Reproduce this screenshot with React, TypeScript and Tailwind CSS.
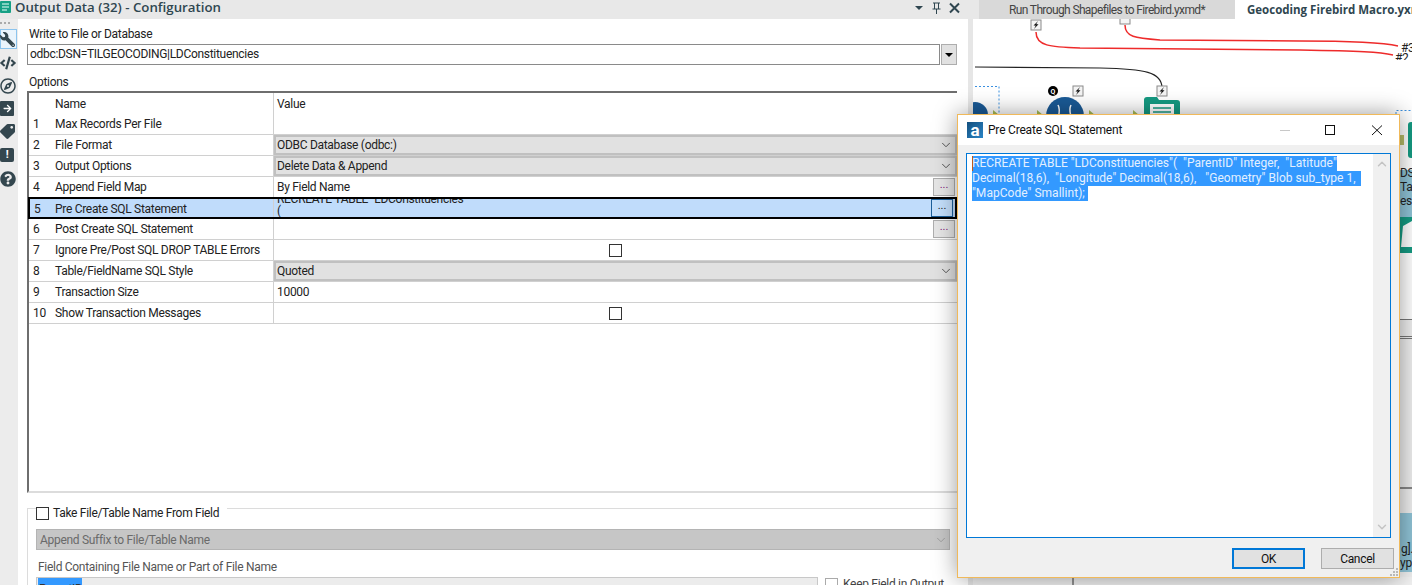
import React from "react";
import { FaWrench, FaCode, FaTag, FaQuestionCircle, FaRegCompass, FaArrowRight } from "react-icons/fa";
import { ChevronDown, ChevronUp } from "lucide-react";

type Row = {
  n: number;
  name: string;
  kind: "none" | "select" | "text" | "more" | "check" | "sql";
  value?: string;
};

const rows: Row[] = [
  { n: 2, name: "File Format", kind: "select", value: "ODBC Database (odbc:)" },
  { n: 3, name: "Output Options", kind: "select", value: "Delete Data & Append" },
  { n: 4, name: "Append Field Map", kind: "more", value: "By Field Name" },
  { n: 5, name: "Pre Create SQL Statement", kind: "sql" },
  { n: 6, name: "Post Create SQL Statement", kind: "more" },
  { n: 7, name: "Ignore Pre/Post SQL DROP TABLE Errors", kind: "check" },
  { n: 8, name: "Table/FieldName SQL Style", kind: "select", value: "Quoted" },
  { n: 9, name: "Transaction Size", kind: "text", value: "10000" },
  { n: 10, name: "Show Transaction Messages", kind: "check" },
];

const MoreButton = ({ active }: { active?: boolean }) => (
  <div
    className={`mr-[2px] flex h-[18px] w-[22px] shrink-0 items-center justify-center border pb-[4px] text-[11px] tracking-normal ${
      active ? "border-[#1d5f99] bg-[#c4dffb] text-[#222]" : "border-[#adadad] bg-[#e6e6e6] text-[#80207a]"
    }`}
  >
    ...
  </div>
);

const Lightning = ({ x, y }: { x: number; y: number }) => (
  <g>
    <rect x={x} y={y} width="10" height="10" fill="#f4f4f4" stroke="#8a8a8a" />
    <path d={`M${x + 7} ${y + 1} L${x + 2.5} ${y + 5.5} L${x + 4.8} ${y + 5.5} L${x + 3} ${y + 9} L${x + 7.5} ${y + 4.2} L${x + 5.2} ${y + 4.2} Z`} fill="#111" />
  </g>
);

const TableRow = ({ row }: { row: Row }) => {
  const selected = row.kind === "sql";
  return (
    <div
      className={`flex h-[21px] whitespace-nowrap ${
        selected
          ? "-ml-[1px] -mt-[1px] h-[22px] border-2 border-black bg-[#c0dcfb]"
          : "border-b border-[#d0d0d0]"
      }`}
    >
      <div className={`shrink-0 pl-[4px] leading-[20px] ${selected ? "w-[23px]" : "w-[24px]"}`}>{row.n}</div>
      <div className="w-[221px] shrink-0 border-r border-[#d0d0d0] pl-[2px] leading-[20px]">{row.name}</div>
      <div className="flex min-w-0 flex-1 items-center overflow-hidden">
        {row.kind === "select" && (
          <div className="flex h-full flex-1 items-center justify-between border-2 border-[#c0c0c0] bg-[#e1e1e1] pl-[1px] pr-[2px]">
            {row.value}
            <ChevronDown size={14} strokeWidth={1.5} className="text-[#444]" />
          </div>
        )}
        {row.kind === "text" && <div className="pl-[3px]">{row.value}</div>}
        {row.kind === "more" && (
          <>
            <div className="flex-1 pl-[3px]">{row.value}</div>
            <MoreButton />
          </>
        )}
        {row.kind === "sql" && (
          <>
            <div className="h-full flex-1 overflow-hidden pl-[3px]">
              <div className="-mt-[6px] leading-[12px]">RECREATE TABLE "LDConstituencies"</div>
              <div className="leading-[12px]">(</div>
            </div>
            <MoreButton active />
          </>
        )}
        {row.kind === "check" && (
          <div className="flex flex-1 justify-center">
            <div className="h-[13px] w-[13px] border border-[#333] bg-white" />
          </div>
        )}
      </div>
    </div>
  );
};

const Canvas = () => (
  <div className="relative flex-1 overflow-hidden bg-white">
    <svg className="absolute inset-0" width="439" height="566" viewBox="973 19 439 566" fill="none">
      <path d="M1036 32 C1036 46 1050 47 1080 48 L1300 50 C1360 51 1380 52 1393 55" stroke="#ee2b2b" strokeWidth="1.5" />
      <path d="M1125 25 C1125 37 1135 38 1160 40 L1300 41 C1360 41 1385 43 1398 46" stroke="#ee2b2b" strokeWidth="1.5" />
      <path d="M975 67 L1100 68 C1145 69 1162 72 1162 88" stroke="#222" strokeWidth="1.2" />
      <text x="1401" y="52" fontSize="12" fill="#222" fontFamily="Roboto">#3</text>
      <text x="1395" y="62" fontSize="12" fill="#222" fontFamily="Roboto">#2</text>
      <rect x="1390" y="60" width="22" height="6" fill="#fff" />
      <Lightning x={1031} y={20} />
      <rect x="1120" y="14" width="10" height="10" fill="#f4f4f4" stroke="#8a8a8a" />
      <Lightning x={1073} y={86} />
      <Lightning x={1157} y={86} />
      <circle cx="1053" cy="91" r="5" fill="#000" />
      <text x="1050.5" y="94" fontSize="7" fontWeight="700" fill="#fff" fontFamily="Roboto">Q</text>
      <path d="M975 86.5 H999 V115" stroke="#3a90e0" strokeDasharray="2 2" />
      <circle cx="975" cy="115" r="13" fill="#1a5a96" />
      <circle cx="1065" cy="116" r="19" fill="#1a5a96" />
      <path d="M1058 105 C1062 112 1056 118 1058 126 M1071 105 C1067 112 1074 118 1071 126" stroke="#fff" strokeWidth="1.5" />
      <path d="M993 110 l6 5 h-6 Z M1037 110 l6 5 h-6 Z M1089 110 l6 5 h-6 Z M1133 110 l6 5 h-6 Z" fill="#a9bd55" />
      <path d="M1144 100 q0 -3 3 -3 h10 l2 3 h18 q3 0 3 3 v14 h-36 Z" fill="#159a82" />
      <path d="M1150 104 h24 v12 h-24 Z" fill="#fff" />
      <path d="M1153 108 h18 M1153 112 h18" stroke="#159a82" strokeWidth="1.5" />
      <path d="M1396 170 V110.5 H1412" stroke="#3a90e0" strokeDasharray="2 2" />
      <rect x="1400" y="135" width="4" height="10" fill="#b8bd6a" />
      <rect x="1408" y="122" width="10" height="36" rx="3" fill="#159a82" />
      <rect x="1400" y="170" width="12" height="47" fill="#8fc3d6" />
      <text x="1400" y="177" fontSize="12" fill="#222" fontFamily="Roboto">DSI</text>
      <text x="1400" y="191" fontSize="12" fill="#222" fontFamily="Roboto">Tab</text>
      <text x="1400" y="205" fontSize="12" fill="#222" fontFamily="Roboto">es</text>
      <rect x="1400" y="217" width="12" height="36" fill="#159a82" />
      <path d="M1403 226 l9 -5 v26 h-11 Z" fill="#fff" />
      <rect x="1400" y="320" width="12" height="193" fill="#eeeeee" />
      <path d="M1400 319.5 H1412 M1400 336.5 H1412 M1400 338.5 H1412" stroke="#777" />
      <path d="M1400 488 H1412" stroke="#888" strokeWidth="2" />
      <rect x="1400" y="513" width="12" height="59" fill="#8fc3d6" />
      <text x="1401" y="553" fontSize="12" fill="#222" fontFamily="Roboto">g].</text>
      <text x="1400" y="567" fontSize="12" fill="#222" fontFamily="Roboto">yp</text>
      <rect x="1400" y="572" width="12" height="13" fill="#eeeeee" />
      <rect x="973" y="577" width="439" height="8" fill="#f1f1f1" />
      <path d="M1073 577 V585" stroke="#333" />
    </svg>
  </div>
);

const SqlDialog = () => (
  <div className="absolute left-[957px] top-[114px] flex h-[464px] w-[443px] flex-col border border-[#f0b95a] bg-[#f0f0f0] shadow-[0_0_22px_rgba(0,0,0,0.4)]">
    <div className="flex h-[30px] shrink-0 items-center bg-white pl-[9px] pr-[1px]">
      <div className="flex h-[16px] w-[16px] items-end justify-center bg-gradient-to-br from-[#14507f] to-[#2a85c6] text-[17px] font-bold leading-[15px] tracking-normal text-white">a</div>
      <div className="ml-[5px] flex-1 tracking-[-0.2px] text-[#111]">Pre Create SQL Statement</div>
      <svg width="118" height="14" viewBox="0 0 118 14" fill="none">
        <path d="M0 7.5 H10" stroke="#c8c8c8" />
        <rect x="45.5" y="2.5" width="9" height="9" stroke="#111" />
        <path d="M92 2.5 L102 12 M102 2.5 L92 12" stroke="#111" />
      </svg>
    </div>
    <div className="flex flex-1 flex-col px-[8px] pt-[8px]">
      <div className="flex h-[385px] shrink-0 border border-[#0078d7] bg-white">
        <div className="relative flex-1 pl-[5px] pt-[2px] leading-[15px] tracking-[0.03px] text-[#e3f0ff]">
          <div className="w-[365px] whitespace-pre bg-[#3399ff]">RECREATE TABLE "LDConstituencies"(  "ParentID" Integer,  "Latitude"</div>
          <div className="w-[389px] whitespace-pre bg-[#3399ff]">Decimal(18,6),  "Longitude" Decimal(18,6),   "Geometry" Blob sub_type 1,</div>
          <div className="w-[116px] whitespace-pre bg-[#3399ff]">"MapCode" Smallint);</div>
          <div className="absolute left-[5px] top-[2px] h-[15px] w-[1px] bg-[#c0561a]" />
        </div>
        <div className="flex w-[17px] shrink-0 flex-col items-center justify-between bg-[#f0f0f0] py-[3px] text-[#c4c4c4]">
          <ChevronUp size={14} strokeWidth={2.5} />
          <ChevronDown size={14} strokeWidth={2.5} />
        </div>
      </div>
      <div className="mt-[10px] flex justify-end gap-[16px] text-[#111]">
        <div className="flex h-[21px] w-[73px] items-center justify-center border-2 border-[#0078d7] bg-[#e1e1e1]">OK</div>
        <div className="-mr-[3px] flex h-[21px] w-[73px] items-center justify-center border border-[#adadad] bg-[#e1e1e1]">Cancel</div>
      </div>
    </div>
    <div className="absolute bottom-[1px] right-[1px] grid grid-cols-3 gap-[1px]">
      <div className="h-[2px] w-[2px]" />
      <div className="h-[2px] w-[2px]" />
      <div className="h-[2px] w-[2px] bg-[#b8b8b8]" />
      <div className="h-[2px] w-[2px]" />
      <div className="h-[2px] w-[2px] bg-[#b8b8b8]" />
      <div className="h-[2px] w-[2px] bg-[#b8b8b8]" />
      <div className="h-[2px] w-[2px] bg-[#b8b8b8]" />
      <div className="h-[2px] w-[2px] bg-[#b8b8b8]" />
      <div className="h-[2px] w-[2px] bg-[#b8b8b8]" />
    </div>
  </div>
);

export default function App() {
  return (
    <div className="relative flex h-[585px] w-[1412px] overflow-hidden bg-white font-['Roboto',sans-serif] text-[12px] tracking-[-0.3px] text-[#222]">
      {/* Configuration panel */}
      <div className="flex w-[968px] shrink-0 flex-col">
        <div className="flex h-[19px] shrink-0 items-center bg-[#e8e8e8] pb-[4px] pr-[5px]">
          <svg width="15" height="15" viewBox="0 0 15 15" className="shrink-0">
            <rect x="0" y="1" width="11" height="12" rx="1" fill="#16a085" />
            <path d="M2 4 h7 M2 7 h7 M2 10 h5" stroke="#e9fff9" />
          </svg>
          <div className="whitespace-nowrap font-['Open_Sans',sans-serif] text-[13.25px] font-semibold leading-[15px] tracking-normal text-[#2f4650]">Output Data (32) - Configuration</div>
          <div className="flex-1" />
          <svg width="46" height="14" viewBox="0 0 46 14" fill="none" className="mr-[2px]">
            <path d="M0 5 H8 L4 9 Z" fill="#2f4650" />
            <path d="M18 2 H25 M19.5 2 V8 M23.5 2 V8 M17.5 8 H25.5 M21.5 8 V13" stroke="#2f4650" />
            <path d="M35 2.5 L44 11.5 M44 2.5 L35 11.5" stroke="#2f4650" strokeWidth="2" />
          </svg>
        </div>
        <div className="flex min-h-0 flex-1">
          {/* Tool rail */}
          <div className="flex w-[18px] shrink-0 flex-col items-start overflow-hidden bg-[#ececec] text-[#34474f]">
            <div className="mt-[3px] h-[2px] w-[10px] border-t-[2px] border-dotted border-[#aaa]" />
            <div className="mt-[5px] flex h-[20px] w-[17px] items-center border border-[#8cc4ee] bg-[#eaf4fc]">
              <FaWrench size={15} className="-ml-[1px] -scale-x-100" />
            </div>
            <FaCode size={16} className="mt-[6px]" />
            <FaRegCompass size={16} className="mt-[7px]" />
            <div className="mt-[7px] flex h-[15px] w-[14px] items-center justify-center rounded-[1px] bg-[#34474f] text-white">
              <FaArrowRight size={9} />
            </div>
            <FaTag size={15} className="mt-[8px] -scale-x-100" />
            <div className="mt-[9px] flex h-[14px] w-[14px] items-center justify-center rounded-[2px] bg-[#34474f] text-[11px] font-bold text-white">!</div>
            <FaQuestionCircle size={16} className="mt-[9px]" />
          </div>
          {/* Form */}
          <div className="min-w-0 flex-1 pl-[9px]">
            <div className="ml-[2px] mt-[8px] h-[14px] leading-[14px]">Write to File or Database</div>
            <div className="mt-[3px] flex h-[21px] w-[930px] gap-[1px]">
              <div className="flex-1 border border-[#8a8a8a] pl-[2px] leading-[19px]">odbc:DSN=TILGEOCODING|LDConstituencies</div>
              <div className="flex w-[16px] items-center justify-center border border-[#adadad] bg-[#e1e1e1]">
                <div className="h-0 w-0 border-x-[4px] border-t-[4px] border-x-transparent border-t-black" />
              </div>
            </div>
            <div className="ml-[2px] mt-[10px] h-[14px] leading-[14px]">Options</div>
            <div className="mt-[2px] h-[402px] w-[930px] border-y-2 border-l-2 border-l-[#6e6e6e] border-t-[#6e6e6e] border-b-[#dcdcdc]">
              <div className="flex h-[42px] border-b border-[#d0d0d0]">
                <div className="w-[24px] shrink-0 pl-[4px] pt-[24px] leading-[14px]">1</div>
                <div className="w-[221px] shrink-0 border-r border-[#d0d0d0] pl-[2px]">
                  <div className="pt-[4px] leading-[14px]">Name</div>
                  <div className="pt-[6px] leading-[14px]">Max Records Per File</div>
                </div>
                <div className="pl-[3px] pt-[4px] leading-[14px]">Value</div>
              </div>
              {rows.map((row) => (
                <TableRow key={row.n} row={row} />
              ))}
            </div>
            <div className="mt-[15px] h-[100px] w-[931px] border-l border-t border-[#dcdcdc] pl-[8px]">
              <div className="-mt-[2px] flex w-fit items-center bg-white pr-[8px]">
                <div className="h-[13px] w-[13px] border border-[#333]" />
                <span className="ml-[4px] leading-[13px]">Take File/Table Name From Field</span>
              </div>
              <div className="mt-[9px] flex h-[21px] w-[914px] items-center justify-between border border-[#b4b4b4] bg-[#c6c6c6] pl-[3px] pr-[1px] text-[#6a6a6a]">
                Append Suffix to File/Table Name
                <ChevronDown size={14} strokeWidth={1.5} className="text-[#999]" />
              </div>
              <div className="ml-[2px] mt-[10px] h-[14px] leading-[14px] text-[#555]">Field Containing File Name or Part of File Name</div>
              <div className="mt-[3px] flex items-start">
                <div className="h-[20px] w-[782px] border border-[#c8c8c8] bg-[#ececec] pl-[1px] pr-[20px]">
                  <div className="h-[18px] w-[44px] overflow-hidden whitespace-nowrap bg-[#3399ff] pl-[1px] pt-[4px] leading-[14px] text-[#333]">ParentID</div>
                </div>
                <div className="ml-[7px] mt-[1px] h-[13px] w-[13px] border border-[#aaa]" />
                <span className="ml-[5px] leading-[14px] text-[#444]">Keep Field in Output</span>
              </div>
            </div>
          </div>
        </div>
      </div>

      {/* Workflow canvas */}
      <div className="flex min-w-0 flex-1 flex-col">
        <div className="flex h-[19px] shrink-0 items-center bg-[#e8e8e8] pl-[11px]">
          <div className="flex h-full w-[256px] items-center justify-center bg-[#d9d9d9] tracking-[-0.62px] text-[#444]">Run Through Shapefiles to Firebird.yxmd*</div>
          <div className="flex h-full flex-1 items-center overflow-hidden whitespace-nowrap bg-white pl-[12px] font-['Open_Sans',sans-serif] text-[11.5px] font-bold tracking-normal text-[#2f4650]">Geocoding Firebird Macro.yxmd</div>
        </div>
        <div className="flex min-h-0 flex-1">
          <div className="w-[5px] shrink-0 bg-[#e6e6e6]" />
          <Canvas />
        </div>
      </div>

      <SqlDialog />
    </div>
  );
}
